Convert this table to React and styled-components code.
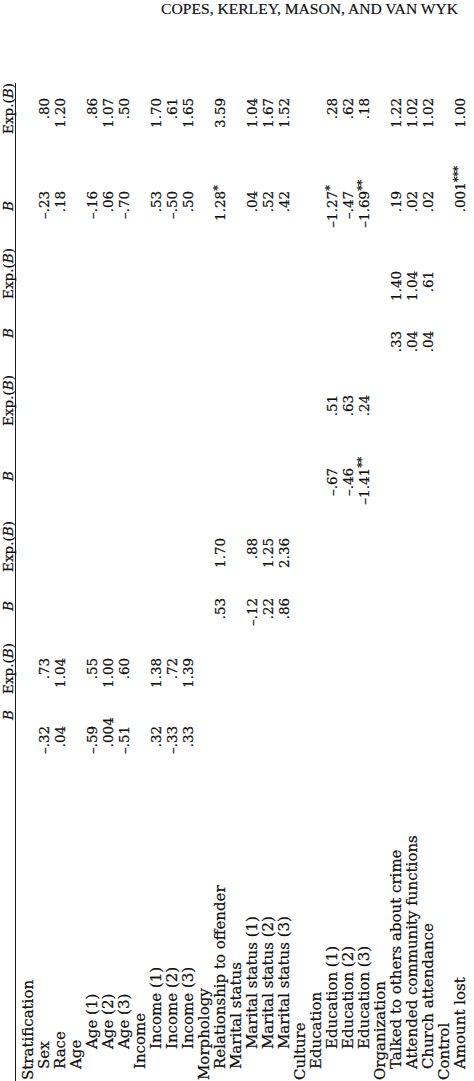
import styled, { createGlobalStyle } from "styled-components";

const GlobalStyle = createGlobalStyle`
  html, body {
    margin: 0;
    padding: 0;
    background: #fff;
    overflow: hidden;
  }
`;

// reading frame: x runs along the table rows, the whole table is turned on its side
const COLS = "308px 60px 68px 60px 60px 70px 73px 64px 60px 80px 93px";

const headers = [
  { label: "B", shift: -3 },
  { label: "Exp", shift: -2 },
  { label: "B", shift: 16 },
  { label: "Exp", shift: -4 },
  { label: "B", shift: 16 },
  { label: "Exp", shift: -7 },
  { label: "B", shift: 10 },
  { label: "Exp", shift: -10 },
  { label: "B", shift: 23 },
  { label: "Exp", shift: -2 },
];

const rows = [
  { name: "Stratification", level: 0 },
  { name: "Sex", level: 1, v: { 0: "–.32", 1: ".73", 8: "–.23", 9: ".80" } },
  { name: "Race", level: 1, v: { 0: ".04", 1: "1.04", 8: ".18", 9: "1.20" } },
  { name: "Age", level: 1 },
  { name: "Age (1)", level: 2, v: { 0: "–.59", 1: ".55", 8: "–.16", 9: ".86" } },
  { name: "Age (2)", level: 2, v: { 0: ".004", 1: "1.00", 8: ".06", 9: "1.07" } },
  { name: "Age (3)", level: 2, v: { 0: "–.51", 1: ".60", 8: "–.70", 9: ".50" } },
  { name: "Income", level: 1 },
  { name: "Income (1)", level: 2, v: { 0: ".32", 1: "1.38", 8: ".53", 9: "1.70" } },
  { name: "Income (2)", level: 2, v: { 0: "–.33", 1: ".72", 8: "–.50", 9: ".61" } },
  { name: "Income (3)", level: 2, v: { 0: ".33", 1: "1.39", 8: ".50", 9: "1.65" } },
  { name: "Morphology", level: 0 },
  { name: "Relationship to offender", level: 1, v: { 2: ".53", 3: "1.70", 8: "1.28*", 9: "3.59" } },
  { name: "Marital status", level: 1 },
  { name: "Marital status (1)", level: 2, v: { 2: "–.12", 3: ".88", 8: ".04", 9: "1.04" } },
  { name: "Marital status (2)", level: 2, v: { 2: ".22", 3: "1.25", 8: ".52", 9: "1.67" } },
  { name: "Marital status (3)", level: 2, v: { 2: ".86", 3: "2.36", 8: ".42", 9: "1.52" } },
  { name: "Culture", level: 0 },
  { name: "Education", level: 1 },
  { name: "Education (1)", level: 2, v: { 4: "–.67", 5: ".51", 8: "–1.27*", 9: ".28" } },
  { name: "Education (2)", level: 2, v: { 4: "–.46", 5: ".63", 8: "–.47", 9: ".62" } },
  { name: "Education (3)", level: 2, v: { 4: "–1.41**", 5: ".24", 8: "–1.69**", 9: ".18" } },
  { name: "Organization", level: 0 },
  { name: "Talked to others about crime", level: 1, v: { 6: ".33", 7: "1.40", 8: ".19", 9: "1.22" } },
  { name: "Attended community functions", level: 1, v: { 6: ".04", 7: "1.04", 8: ".02", 9: "1.02" } },
  { name: "Church attendance", level: 1, v: { 6: ".04", 7: ".61", 8: ".02", 9: "1.02" } },
  { name: "Control", level: 0 },
  { name: "Amount lost", level: 1, v: { 8: ".001***", 9: "1.00" } },
];

const Page = styled.div`
  width: 474px;
  height: 1081px;
  display: flex;
  flex-direction: column;
  background: #fff;
  color: #111;
  overflow: hidden;
`;

const RunningHead = styled.header`
  flex: none;
  height: 20px;
  display: flex;
  justify-content: flex-end;
  padding-right: 16px;
  font-family: "Liberation Serif", serif;
  font-size: 15.6px;
  line-height: 18px;
  color: #111;
  -webkit-text-stroke: 0.2px #111;
`;

const Stage = styled.div`
  flex: 1;
  overflow: hidden;
`;

const Sideways = styled.div`
  width: 998px;
  height: 474px;
  transform-origin: 0 0;
  transform: translateY(1061px) rotate(-90deg);
  font-family: "DejaVu Serif", serif;
  -webkit-text-stroke: 0.25px #111;
`;

const HeadRow = styled.div`
  display: grid;
  grid-template-columns: ${COLS};
  height: 15px;
  align-items: end;
  border-bottom: 1.5px solid #1a1a1a;
  font-size: 13.5px;
  line-height: 13px;
`;

const HeadCell = styled.div`
  display: flex;
  justify-content: flex-end;
  white-space: nowrap;
  margin-right: ${(p) => p.$shift}px;
`;

const Body = styled.div`
  padding-top: 3.5px;
`;

const Row = styled.div`
  display: grid;
  grid-template-columns: ${COLS};
  height: 16px;
  line-height: 16px;
`;

const Label = styled.div`
  font-size: 15px;
  white-space: nowrap;
  padding-left: ${(p) => [1, 12, 32][p.$level]}px;
`;

const Num = styled.div`
  display: flex;
  font-size: 13.5px;
  white-space: nowrap;
`;

const Whole = styled.span`
  flex: 1;
  text-align: right;
`;

const Frac = styled.span`
  flex: none;
  width: 30px;
`;

const Star = styled.sup`
  font-size: 0.8em;
  line-height: 0;
  vertical-align: 0.35em;
`;

function Value({ text }) {
  if (!text) return <Num />;
  const dot = text.indexOf(".");
  const whole = text.slice(0, dot + 1);
  const rest = text.slice(dot + 1);
  const digits = rest.replace(/\*/g, "");
  const stars = rest.slice(digits.length);
  return (
    <Num>
      <Whole>{whole}</Whole>
      <Frac>
        {digits}
        {stars && <Star>{stars}</Star>}
      </Frac>
    </Num>
  );
}

export default function App() {
  return (
    <>
      <GlobalStyle />
      <Page>
        <RunningHead>COPES, KERLEY, MASON, AND VAN WYK</RunningHead>
        <Stage>
          <Sideways>
            <HeadRow>
              <div />
              {headers.map((h, i) => (
                <HeadCell key={i} $shift={h.shift}>
                  {h.label === "B" ? (
                    <i>B</i>
                  ) : (
                    <span>
                      Exp.(<i>B</i>)
                    </span>
                  )}
                </HeadCell>
              ))}
            </HeadRow>
            <Body>
              {rows.map((r) => (
                <Row key={r.name}>
                  <Label $level={r.level}>{r.name}</Label>
                  {headers.map((_, i) => (
                    <Value key={i} text={r.v && r.v[i]} />
                  ))}
                </Row>
              ))}
            </Body>
          </Sideways>
        </Stage>
      </Page>
    </>
  );
}
